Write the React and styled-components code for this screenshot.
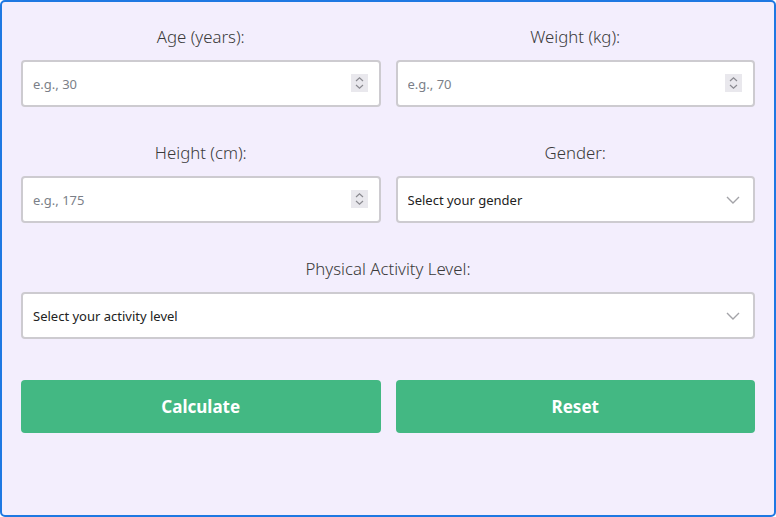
import React, { useState } from 'react';
import styled, { createGlobalStyle } from 'styled-components';

const GlobalStyle = createGlobalStyle`
    html, body {
        margin: 0;
        padding: 0;
        height: 100%;
    }
    #root {
        height: 100%;
    }
    * {
        box-sizing: border-box;
    }
`

const Frame = styled.div`
    height: 517px;
    background: #f3eefd;
    border: 2px solid #1e78e2;
    border-radius: 5px;
    padding: 24px 19px 0;
    font-family: "Noto Sans", "Open Sans", sans-serif;
`

const Grid = styled.div`
    display: grid;
    grid-template-columns: 1fr 1fr;
    column-gap: 15px;
    row-gap: 35px;
`

const Field = styled.div`
    display: flex;
    flex-direction: column;
    grid-column: ${props => props.wide ? '1 / -1' : 'auto'};
`

const Label = styled.label`
    display: block;
    text-align: center;
    font-size: 16.8px;
    line-height: 22px;
    font-weight: 300;
    color: #3a3a3a;
    margin-bottom: 12px;
`

const InputWrap = styled.div`
    position: relative;
`

const Input = styled.input`
    width: 100%;
    height: 47px;
    border: 2px solid #cdcbd0;
    border-radius: 4px;
    background: #fff;
    padding: 0 40px 0 10px;
    font-family: "Noto Sans", "Open Sans", sans-serif;
    font-size: 13px;
    color: #222;
    outline: none;
    -moz-appearance: textfield;
    &::placeholder {
        color: #7b7f88;
    }
    &::-webkit-outer-spin-button,
    &::-webkit-inner-spin-button {
        -webkit-appearance: none;
        margin: 0;
    }
`

const Spinner = styled.span`
    position: absolute;
    right: 13px;
    top: 14px;
    width: 17px;
    height: 18px;
    background: #e9e8ed;
    display: flex;
    align-items: center;
    justify-content: center;
    pointer-events: none;
`

const Select = styled.select`
    width: 100%;
    height: 47px;
    border: 2px solid #cdcbd0;
    border-radius: 4px;
    background: #fff;
    padding: 0 40px 0 10px;
    font-family: "Noto Sans", "Open Sans", sans-serif;
    font-size: 13px;
    color: #222;
    appearance: none;
    outline: none;
`

const Chevron = styled.span`
    position: absolute;
    right: 15px;
    top: 20px;
    display: flex;
    pointer-events: none;
`

const Actions = styled.div`
    display: grid;
    grid-template-columns: 1fr 1fr;
    column-gap: 15px;
    margin-top: 41px;
`

const Button = styled.button`
    height: 53px;
    border: none;
    border-radius: 4px;
    background: #43b883;
    color: #fff;
    font-family: "Noto Sans", "Open Sans", sans-serif;
    font-size: 17px;
    font-weight: 700;
    cursor: pointer;
`

const NumberField = ({ label, placeholder }) => (
    <Field>
        <Label>{label}</Label>
        <InputWrap>
            <Input type="number" placeholder={placeholder} />
            <Spinner>
                <svg width="9" height="14" viewBox="0 0 9 14" fill="none" stroke="#8a8a90" strokeWidth="1.2">
                    <path d="M1 5 L4.5 1.8 L8 5" />
                    <path d="M1 9 L4.5 12.2 L8 9" />
                </svg>
            </Spinner>
        </InputWrap>
    </Field>
)

const SelectField = ({ label, options, wide }) => (
    <Field wide={wide}>
        <Label>{label}</Label>
        <InputWrap>
            <Select defaultValue="">
                {options.map(o => <option key={o.value} value={o.value}>{o.text}</option>)}
            </Select>
            <Chevron>
                <svg width="14" height="8" viewBox="0 0 14 8" fill="none" stroke="#a3a3a8" strokeWidth="1.4">
                    <path d="M1 1 L7 7 L13 1" />
                </svg>
            </Chevron>
        </InputWrap>
    </Field>
)

const App = () => {
    const [key, setKey] = useState(0);

    return (
        <>
            <GlobalStyle />
            <Frame>
                <Grid key={key}>
                    <NumberField label="Age (years):" placeholder="e.g., 30" />
                    <NumberField label="Weight (kg):" placeholder="e.g., 70" />
                    <NumberField label="Height (cm):" placeholder="e.g., 175" />
                    <SelectField
                        label="Gender:"
                        options={[
                            { value: '', text: 'Select your gender' },
                            { value: 'male', text: 'Male' },
                            { value: 'female', text: 'Female' },
                        ]}
                    />
                    <SelectField
                        wide
                        label="Physical Activity Level:"
                        options={[
                            { value: '', text: 'Select your activity level' },
                            { value: 'low', text: 'Sedentary' },
                            { value: 'mid', text: 'Moderately active' },
                            { value: 'high', text: 'Very active' },
                        ]}
                    />
                </Grid>
                <Actions>
                    <Button>Calculate</Button>
                    <Button onClick={() => setKey(k => k + 1)}>Reset</Button>
                </Actions>
            </Frame>
        </>
    )
}

export default App
